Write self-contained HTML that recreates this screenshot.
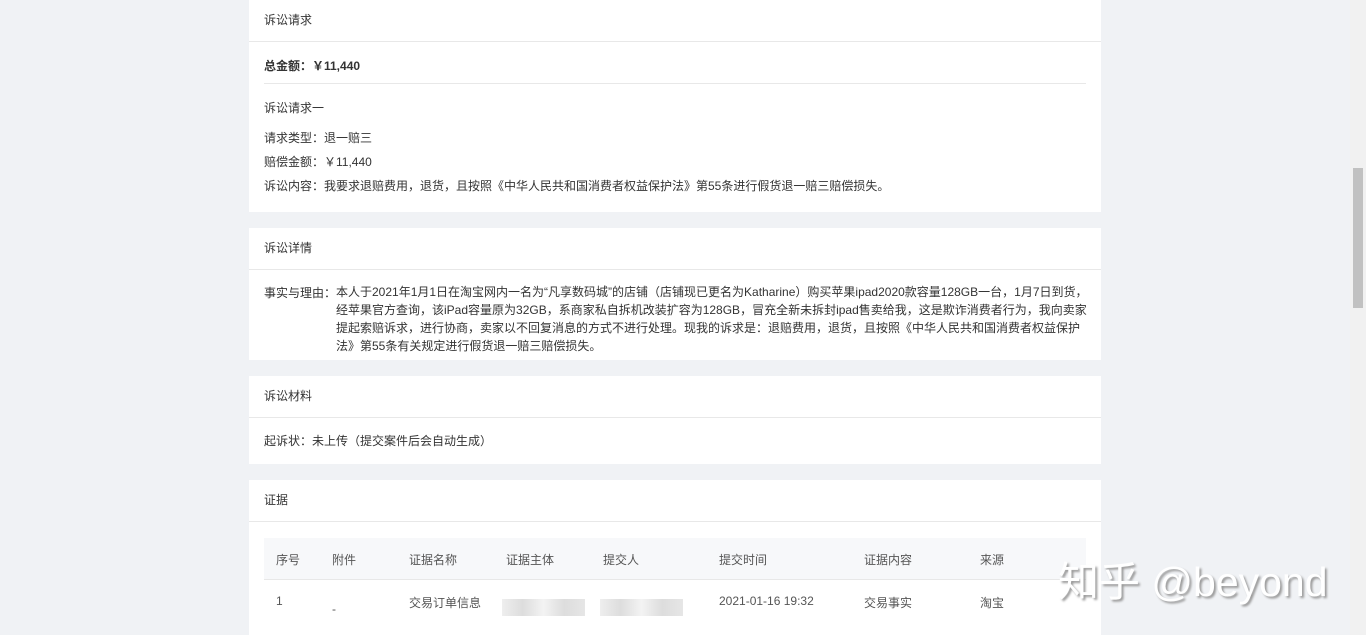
<!DOCTYPE html>
<html><head><meta charset="utf-8"><style>
*{margin:0;padding:0;box-sizing:border-box}
html,body{width:1366px;height:635px;overflow:hidden}
body{background:#f0f2f5;font-family:"Liberation Sans","Noto Sans CJK SC",sans-serif;font-size:12px;color:#333;position:relative}
.card{position:absolute;left:249px;width:852px;background:#fff;overflow:hidden}
.hd{height:42px;line-height:41px;padding-left:15px;border-bottom:1px solid #e8e8e8;font-size:12px;color:#333}
.t{position:absolute;left:15px;white-space:nowrap}
.sb{position:absolute;right:0;top:0;width:16px;height:635px;background:#f1f1f1}
.th{position:absolute;right:3px;top:168px;width:10px;height:140px;background:#c1c1c1}
.blur{position:absolute;height:17px;background:linear-gradient(90deg,#eee,#ddd 25%,#f3f3f3 50%,#ddd 75%,#e6e6e6)}
.ln{display:block;white-space:nowrap}
</style></head><body>
<div class="card" style="top:0;height:212px">
<div class="hd">诉讼请求</div>
<div class="t" style="top:57px;font-weight:bold">总金额：￥11,440</div>
<div style="position:absolute;left:15px;right:15px;top:83px;border-top:1px solid #e8e8e8"></div>
<div class="t" style="top:99px">诉讼请求一</div>
<div class="t" style="top:129px">请求类型：退一赔三</div>
<div class="t" style="top:153px">赔偿金额：￥11,440</div>
<div class="t" style="top:177px">诉讼内容：我要求退赔费用，退货，且按照《中华人民共和国消费者权益保护法》第55条进行假货退一赔三赔偿损失。</div>
</div>
<div class="card" style="top:228px;height:132px">
<div class="hd">诉讼详情</div>
<div class="t" style="top:56px">事实与理由：</div>
<div style="position:absolute;left:87px;top:55px;width:750px;line-height:18px">
<span class="ln">本人于2021年1月1日在淘宝网内一名为“凡享数码城”的店铺（店铺现已更名为Katharine）购买苹果ipad2020款容量128GB一台，1月7日到货，</span>
<span class="ln">经苹果官方查询，该iPad容量原为32GB，系商家私自拆机改装扩容为128GB，冒充全新未拆封ipad售卖给我，这是欺诈消费者行为，我向卖家</span>
<span class="ln">提起索赔诉求，进行协商，卖家以不回复消息的方式不进行处理。现我的诉求是：退赔费用，退货，且按照《中华人民共和国消费者权益保护</span>
<span class="ln">法》第55条有关规定进行假货退一赔三赔偿损失。</span>
</div>
</div>
<div class="card" style="top:376px;height:88px">
<div class="hd">诉讼材料</div>
<div class="t" style="top:56px">起诉状：未上传（提交案件后会自动生成）</div>
</div>
<div class="card" style="top:480px;height:155px">
<div class="hd">证据</div>
<div style="position:absolute;left:15px;right:15px;top:58px;height:42px;background:#f7f8fa;border-bottom:1px solid #e8e8e8"></div>
<div style="position:absolute;top:71px;left:0;width:852px;color:#555">
<span class="t" style="left:27px">序号</span><span class="t" style="left:83px">附件</span><span class="t" style="left:160px">证据名称</span><span class="t" style="left:257px">证据主体</span><span class="t" style="left:354px">提交人</span><span class="t" style="left:470px">提交时间</span><span class="t" style="left:615px">证据内容</span><span class="t" style="left:731px">来源</span></div>
<div style="position:absolute;top:114px;left:0;width:852px;color:#555">
<span class="t" style="left:27px">1</span><span class="t" style="left:83px;top:8px">-</span><span class="t" style="left:160px">交易订单信息</span><span class="t" style="left:470px">2021-01-16 19:32</span><span class="t" style="left:615px">交易事实</span><span class="t" style="left:731px">淘宝</span></div>
<div class="blur" style="left:253px;top:119px;width:83px"></div>
<div class="blur" style="left:351px;top:119px;width:83px"></div>
</div>
<div style="position:absolute;left:1058px;top:548px;font-size:41px;color:#fff;text-shadow:2px 2px 2px #999;white-space:nowrap">知乎 @beyond</div>
<div class="sb"><div class="th"></div></div>
</body></html>
